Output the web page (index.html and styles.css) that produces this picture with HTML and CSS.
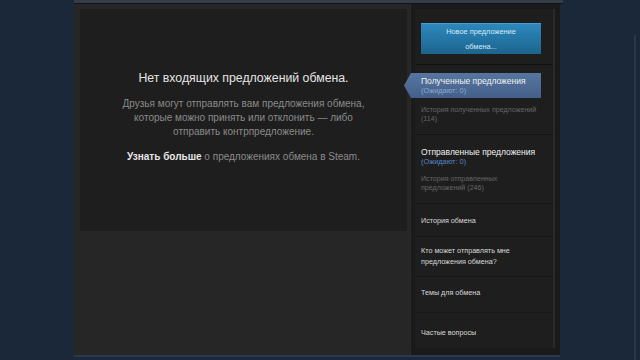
FILE: index.html
```html
<!DOCTYPE html>
<html lang="ru">
  <head>
    <meta charset="UTF-8" />
    <meta name="viewport" content="width=device-width, initial-scale=1.0" />
    <title>Предложения обмена</title>
    <link rel="stylesheet" href="styles.css">
  </head>
  <body>
    <div class="page">
      <div class="trade-wrap">
        <div class="trade-top"></div>
        <div class="trade-main">
          <div class="trade-left">
            <div class="empty-box">
              <h2 class="empty-title">Нет входящих предложений обмена.</h2>
              <p class="empty-text">
                Друзья могут отправлять вам предложения обмена,<br />
                которые можно принять или отклонить — либо<br />
                отправить контрпредложение.
              </p>
              <p class="empty-more">
                <a href="#">Узнать больше</a> о предложениях обмена в Steam.
              </p>
            </div>
          </div>
          <div class="trade-side">
            <div class="side-col">
              <div class="side-btn-wrap">
                <a class="side-btn" href="#">Новое предложение<br />обмена...</a>
              </div>
              <div class="side-group">
                <a class="side-active" href="#">
                  <span class="side-title">Полученные предложения</span>
                  <span class="side-sub">(Ожидают: 0)</span>
                </a>
                <a class="side-history" href="#">История полученных предложений (114)</a>
              </div>
              <div class="side-group sent">
                <a class="side-plain" href="#">
                  <span class="side-title">Отправленные предложения</span>
                  <span class="side-sub blue">(Ожидают: 0)</span>
                </a>
                <a class="side-history" href="#">История отправленных<br />предложений (246)</a>
              </div>
              <a class="side-link" href="#">История обмена</a>
              <a class="side-link two" href="#">Кто может отправлять мне<br />предложения обмена?</a>
              <a class="side-link topics" href="#">Темы для обмена</a>
              <a class="side-link last" href="#">Частые вопросы</a>
            </div>
          </div>
        </div>
      </div>
      <div class="scroll-line"></div>
    </div>
  </body>
</html>
```

FILE: styles.css
```css
body {
  margin: 0;
  background-color: #1b2839;
  font-family: "Liberation Sans", Arial, sans-serif;
  height: 360px;
  overflow: hidden;
}
a {
  text-decoration: none;
}
.page {
  height: 360px;
  position: relative;
}
.trade-wrap {
  margin-left: 74px;
  width: 486px;
  height: 355px;
  background-color: #262626;
  border-bottom: 2px solid #2b3848;
  display: flex;
  flex-direction: column;
}
.trade-top {
  height: 4px;
  background-color: #343c49;
  border-bottom: 1px solid #141414;
  margin-right: -3px;
}
.trade-main {
  flex: 1;
  display: flex;
}
.trade-left {
  width: 336px;
  padding: 5px 3px 0 6px;
  box-sizing: border-box;
}
.empty-box {
  height: 222px;
  background-color: #1e1e1e;
  box-sizing: border-box;
  padding-top: 61px;
  text-align: center;
}
.empty-title {
  margin: 0;
  font-size: 12.3px;
  font-weight: 400;
  color: #e4e4e4;
  line-height: 16px;
}
.empty-text {
  margin: 11px 0 0;
  font-size: 10px;
  line-height: 14px;
  color: #8a8a8a;
}
.empty-more {
  margin: 11px 0 0;
  font-size: 10px;
  line-height: 14px;
  color: #8a8a8a;
}
.empty-more a {
  color: #e6e6e6;
  font-weight: 700;
}
.trade-side {
  width: 150px;
  background-color: #1a1a1a;
  border-left: 1px solid #2a2a2a;
  padding: 5px 5px 7px 4px;
  box-sizing: border-box;
  display: flex;
}
.side-col {
  flex: 1;
  background-color: #1e1e1e;
  border-right: 2px solid #2a2a2a;
  display: flex;
  flex-direction: column;
}
.side-btn-wrap {
  padding: 14px 12px 10px 6px;
  border-bottom: 1px solid #121212;
}
.side-btn {
  display: block;
  height: 31px;
  box-sizing: border-box;
  background: linear-gradient(to bottom, #2d88bd, #1c648d);
  border-top: 1px solid #449fd0;
  color: #d4ebf8;
  font-size: 7.4px;
  line-height: 15px;
  text-align: center;
}
.side-group {
  padding: 8px 0 10px;
  border-bottom: 1px solid #141414;
  display: flex;
  flex-direction: column;
}
.side-active {
  margin-left: -11px;
  margin-right: 12px;
  height: 25px;
  box-sizing: border-box;
  padding: 3px 0 0 17px;
  background: linear-gradient(to bottom, #56769f, #44608a);
  clip-path: polygon(7px 0, 100% 0, 100% 100%, 7px 100%, 0 50%);
  display: flex;
  flex-direction: column;
}
.side-title {
  font-size: 8.5px;
  line-height: 10px;
  color: #f0f0f0;
}
.side-active .side-sub {
  font-size: 7.4px;
  line-height: 10px;
  color: #8aa8cf;
}
.side-sub.blue {
  font-size: 7.4px;
  line-height: 10px;
  color: #5585c6;
}
.side-plain {
  padding: 2px 0 0 6px;
  display: flex;
  flex-direction: column;
}
.sent {
  padding-top: 10px;
}
.side-history {
  margin-top: 8px;
  padding-left: 6px;
  font-size: 7.1px;
  line-height: 9px;
  color: #666;
}
.sent .side-history {
  margin-top: 8px;
}
.side-link {
  padding: 11px 6px 10px;
  border-bottom: 1px solid #141414;
  font-size: 7.2px;
  line-height: 11px;
  color: #d8d8d8;
}
.side-link.two {
  padding: 8px 6px 9px;
}
.side-link.topics {
  padding: 10px 6px 14px;
  border-bottom: 1px solid #1a1a1a;
}
.side-link.last {
  border-bottom: none;
  padding-top: 14px;
}
.scroll-line {
  position: absolute;
  left: 634px;
  top: 35px;
  width: 2px;
  height: 325px;
  background-color: #2a3748;
}
```
